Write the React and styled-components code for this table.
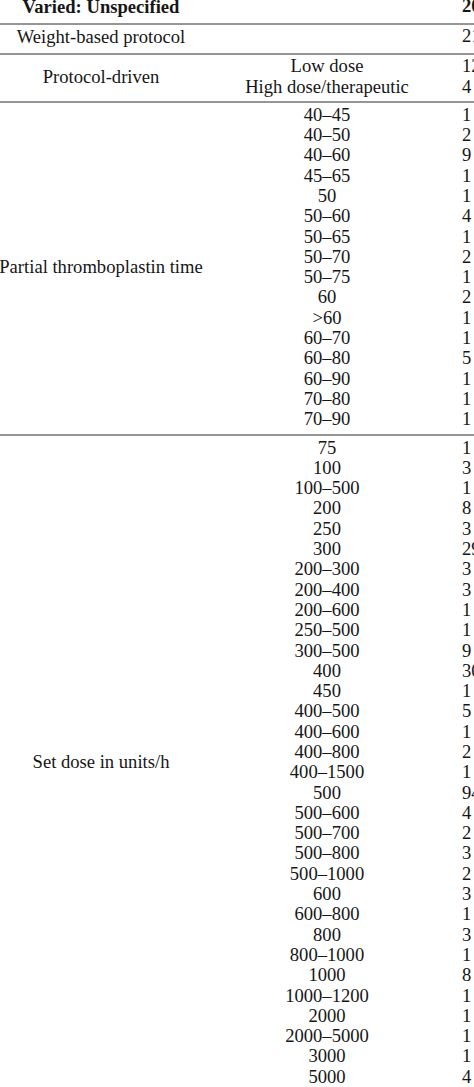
import React from 'react';
import styled, { createGlobalStyle } from 'styled-components';

const GlobalStyle = createGlobalStyle`
  html, body {
    margin: 0;
    padding: 0;
    background: #ffffff;
    overflow: hidden;
  }
  body {
    font-family: "Liberation Serif", "Times New Roman", serif;
    color: #161616;
  }
`;

const Table = styled.div`
  width: 474px;
  margin-top: -5.3px;
  font-size: 18.6px;
`;

const Section = styled.section`
  display: grid;
  grid-template-columns: 202px 1fr;
  padding: 1.5px 0 4.5px;
  border-bottom: ${(props) => (props.last ? 'none' : '2px solid #959595')};
`;

const Label = styled.div`
  display: flex;
  align-items: center;
  justify-content: center;
  white-space: nowrap;
  font-weight: ${(props) => (props.bold ? 700 : 400)};
`;

const Entries = styled.div`
  display: flex;
  flex-direction: column;
`;

const Entry = styled.div`
  display: grid;
  grid-template-columns: 250px 1fr;
  height: 20.3px;
  line-height: 20.3px;
  white-space: nowrap;
  font-weight: ${(props) => (props.bold ? 700 : 400)};
`;

const Sub = styled.span`
  text-align: center;
`;

const Count = styled.span`
  padding-left: 10px;
`;

const sections = [
  { label: 'Varied: Unspecified', bold: true, rows: [['', '20']] },
  { label: 'Weight-based protocol', rows: [['', '21']] },
  {
    label: 'Protocol-driven',
    rows: [
      ['Low dose', '12'],
      ['High dose/therapeutic', '4'],
    ],
  },
  {
    label: 'Partial thromboplastin time',
    rows: [
      ['40–45', '1'],
      ['40–50', '2'],
      ['40–60', '9'],
      ['45–65', '1'],
      ['50', '1'],
      ['50–60', '4'],
      ['50–65', '1'],
      ['50–70', '2'],
      ['50–75', '1'],
      ['60', '2'],
      ['>60', '1'],
      ['60–70', '1'],
      ['60–80', '5'],
      ['60–90', '1'],
      ['70–80', '1'],
      ['70–90', '1'],
    ],
  },
  {
    label: 'Set dose in units/h',
    last: true,
    rows: [
      ['75', '1'],
      ['100', '3'],
      ['100–500', '1'],
      ['200', '8'],
      ['250', '3'],
      ['300', '29'],
      ['200–300', '3'],
      ['200–400', '3'],
      ['200–600', '1'],
      ['250–500', '1'],
      ['300–500', '9'],
      ['400', '30'],
      ['450', '1'],
      ['400–500', '5'],
      ['400–600', '1'],
      ['400–800', '2'],
      ['400–1500', '1'],
      ['500', '94'],
      ['500–600', '4'],
      ['500–700', '2'],
      ['500–800', '3'],
      ['500–1000', '2'],
      ['600', '3'],
      ['600–800', '1'],
      ['800', '3'],
      ['800–1000', '1'],
      ['1000', '8'],
      ['1000–1200', '1'],
      ['2000', '1'],
      ['2000–5000', '1'],
      ['3000', '1'],
      ['5000', '4'],
    ],
  },
];

export default function App() {
  return (
    <>
      <GlobalStyle />
      <Table>
        {sections.map((s) => (
          <Section key={s.label} last={s.last}>
            <Label bold={s.bold}>{s.label}</Label>
            <Entries>
              {s.rows.map(([sub, count], i) => (
                <Entry key={i} bold={s.bold}>
                  <Sub>{sub}</Sub>
                  <Count>{count}</Count>
                </Entry>
              ))}
            </Entries>
          </Section>
        ))}
      </Table>
    </>
  );
}
